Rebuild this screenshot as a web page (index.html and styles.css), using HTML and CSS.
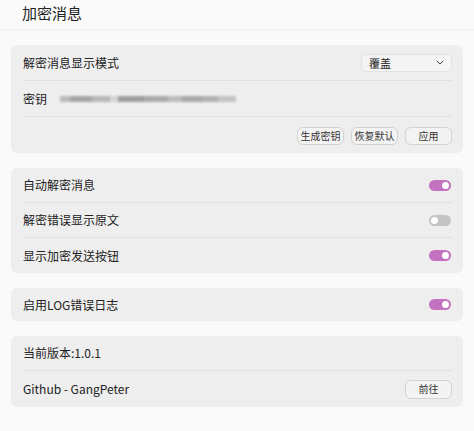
FILE: index.html
```html
<!DOCTYPE html>
<html lang="zh-CN">
<head>
<meta charset="utf-8">
<link rel="stylesheet" href="styles.css">
</head>
<body>
<div class="page">
  <header class="header"><h1 class="title">加密消息</h1></header>
  <main class="content">
    <section class="card">
      <div class="row row-tall">
        <span class="label">解密消息显示模式</span>
        <div class="select"><span>覆盖</span>
          <svg class="chev" viewBox="0 0 10 6" width="8" height="5"><path d="M1 1l4 4 4-4" fill="none" stroke="#333" stroke-width="1.2"/></svg>
        </div>
      </div>
      <div class="row row-tall">
        <span class="label">密钥</span>
        <div class="key">
          <i class="k k1"></i><i class="k k2"></i><i class="k k3"></i><i class="k k4"></i><i class="k k5"></i><i class="k k6"></i><i class="k k7"></i><i class="k k8"></i><i class="k k9"></i><i class="k k10"></i>
        </div>
      </div>
      <div class="row row-tall row-end">
        <div class="btns">
          <button class="btn">生成密钥</button>
          <button class="btn">恢复默认</button>
          <button class="btn">应用</button>
        </div>
      </div>
    </section>
    <section class="card">
      <div class="row"><span class="label">自动解密消息</span><span class="toggle on"></span></div>
      <div class="row"><span class="label">解密错误显示原文</span><span class="toggle"></span></div>
      <div class="row"><span class="label">显示加密发送按钮</span><span class="toggle on"></span></div>
    </section>
    <section class="card">
      <div class="row row-short"><span class="label">启用LOG错误日志</span><span class="toggle on"></span></div>
    </section>
    <section class="card">
      <div class="row"><span class="label">当前版本:1.0.1</span></div>
      <div class="row row-tall"><span class="label">Github - GangPeter</span><button class="btn btn-go">前往</button></div>
    </section>
  </main>
</div>
</body>
</html>
```
FILE: styles.css
```css
* { box-sizing: border-box; }
html, body { margin: 0; padding: 0; }
body {
  background: #fafafa;
  font-family: "Noto Sans CJK SC", "Noto Sans", sans-serif;
  color: #222;
  width: 474px;
  height: 431px;
  overflow: hidden;
}
.header {
  height: 30px;
  padding: 0 22px;
  display: flex;
  align-items: center;
  border-bottom: 1px solid #f1f1f1;
}
.title {
  margin: 0;
  font-size: 15px;
  font-weight: 400;
  line-height: 1;
  padding-bottom: 4px;
}
.content {
  padding: 15px 11px 0;
  display: flex;
  flex-direction: column;
  gap: 15px;
}
.card {
  background: #eeeeee;
  border-radius: 6px;
  padding: 0 11px 0 12px;
  display: flex;
  flex-direction: column;
}
.row {
  height: 35px;
  display: flex;
  align-items: center;
  justify-content: space-between;
  border-bottom: 1px solid #e0e0e0;
}
.row:last-child { border-bottom: none; }
.row-tall { height: 36px; }
.row-short { height: 33px; }
.row-end { justify-content: flex-end; }
.label { font-size: 12px; line-height: 1; }
.select {
  width: 91px;
  height: 18px;
  border: 1px solid #e2e2e2;
  background: #f4f4f4;
  border-radius: 5px;
  display: flex;
  align-items: center;
  justify-content: space-between;
  padding: 0 7px;
  font-size: 11px;
}
.chev { display: block; }
.key {
  margin-left: 13px;
  margin-right: auto;
  width: 176px;
  height: 6px;
  display: flex;
  filter: blur(1px);
}
.k { display: block; height: 100%; }
.k1 { width: 10px; background: #bbb; }
.k2 { width: 22px; background: #a6a6a6; }
.k3 { width: 18px; background: #b8b8b8; }
.k4 { width: 8px; background: #d4d4d4; }
.k5 { width: 26px; background: #9f9f9f; }
.k6 { width: 24px; background: #ababab; }
.k7 { width: 14px; background: #bdbdbd; }
.k8 { width: 20px; background: #a8a8a8; }
.k9 { width: 16px; background: #b2b2b2; }
.k10 { width: 18px; background: #c4c4c4; }
.btns { display: flex; gap: 7px; padding-top: 2px; }
.btn {
  width: 47px;
  height: 18px;
  padding: 0;
  border: 1px solid #d2d2d2;
  background: #f3f3f3;
  border-radius: 6px;
  font-family: "Noto Sans CJK SC", sans-serif;
  font-size: 10px;
  color: #333;
  line-height: 1;
}
.btn-go { height: 19px; }
.toggle {
  width: 22px;
  height: 11px;
  border-radius: 6px;
  background: #c4c4c4;
  position: relative;
  margin-right: 1px;
}
.toggle::after {
  content: "";
  position: absolute;
  top: 2px;
  left: 2px;
  width: 7px;
  height: 7px;
  border-radius: 50%;
  background: #fff;
}
.toggle.on { background: #c372c0; }
.toggle.on::after { left: auto; right: 2px; }
```
